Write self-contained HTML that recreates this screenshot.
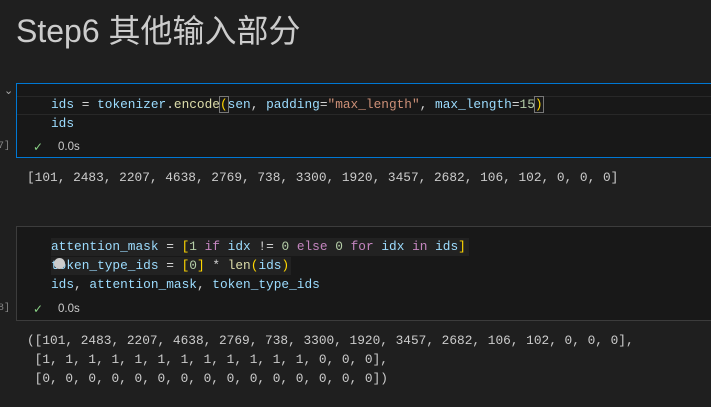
<!DOCTYPE html>
<html><head><meta charset="utf-8"><style>
body{margin:0;width:711px;height:407px;background:#1f1f1f;position:relative;overflow:hidden;font-family:"Liberation Mono",monospace;}
.a{position:absolute;white-space:pre;}
.code{font-size:12.8px;line-height:19px;color:#9cdcfe;}
.out{font-size:12.8px;line-height:19px;color:#cccccc;}
.cell{position:absolute;left:16px;right:-2px;background:#181818;}
.p{color:#d4d4d4}.s{color:#ce9178}.n{color:#b5cea8}.f{color:#dcdcaa}.k{color:#c586c0}.b{color:#ffd700}.c{color:#4ec9b0}
.ck{color:#89d185;font-family:"DejaVu Sans",sans-serif;font-size:12px;font-weight:300}
.t{color:#cccccc;font-family:"Liberation Sans",sans-serif;font-size:11.5px}
.lbl{color:#858585;font-size:10px}
</style></head><body>
<div class="a" style="left:16px;top:9px;font-family:'Liberation Sans','Noto Sans CJK SC',sans-serif;font-size:32px;color:#cccccc;line-height:44px">Step6 其他输入部分</div>

<div class="cell" style="top:83px;height:73px;border:1px solid #0078d4;"></div>
<div class="a" style="left:17px;right:0;top:96px;height:17px;border-top:1px solid #282828;border-bottom:1px solid #282828"></div>
<div class="a" style="left:4px;top:84px;color:#aaa;font-family:'Liberation Sans';font-size:11px">⌄</div>
<div class="a code" style="left:51px;top:95px">ids <span class="p">=</span> tokenizer<span class="p">.</span><span class="f">encode</span><span class="b" style="outline:1px solid #777">(</span>sen<span class="p">,</span> padding<span class="p">=</span><span class="s">"max_length"</span><span class="p">,</span> max_length<span class="p">=</span><span class="n">15</span><span class="b" style="outline:1px solid #777">)</span>
ids</div>
<div class="a ck" style="left:33px;top:140px">✓</div>
<div class="a t" style="left:58px;top:141px">0.0s</div>
<div class="a lbl" style="left:-2px;top:141px">7]</div>
<div class="a out" style="left:27px;top:168px">[101, 2483, 2207, 4638, 2769, 738, 3300, 1920, 3457, 2682, 106, 102, 0, 0, 0]</div>

<div class="cell" style="top:226px;height:93px;border:1px solid #3c3c3c;"></div>
<div class="a" style="left:51px;top:238px;width:418px;height:18px;background:#222"></div>
<div class="a" style="left:51px;top:257px;width:240px;height:18px;background:#222"></div>
<div class="a code" style="left:51px;top:237px">attention_mask <span class="p">=</span> <span class="b">[</span><span class="n">1</span> <span class="k">if</span> idx <span class="p">!=</span> <span class="n">0</span> <span class="k">else</span> <span class="n">0</span> <span class="k">for</span> idx <span class="k">in</span> ids<span class="b">]</span>
token_type_ids <span class="p">=</span> <span class="b">[</span><span class="n">0</span><span class="b">]</span> <span class="p">*</span> <span class="f">len</span><span class="b">(</span>ids<span class="b">)</span>
ids<span class="p">,</span> attention_mask<span class="p">,</span> token_type_ids</div>
<div class="a" style="left:54px;top:258px;width:11px;height:11px;border-radius:50%;background:#ccc"></div>
<div class="a ck" style="left:33px;top:302px">✓</div>
<div class="a t" style="left:58px;top:303px">0.0s</div>
<div class="a lbl" style="left:-2px;top:303px">8]</div>
<div class="a out" style="left:27px;top:331px">([101, 2483, 2207, 4638, 2769, 738, 3300, 1920, 3457, 2682, 106, 102, 0, 0, 0],
 [1, 1, 1, 1, 1, 1, 1, 1, 1, 1, 1, 1, 0, 0, 0],
 [0, 0, 0, 0, 0, 0, 0, 0, 0, 0, 0, 0, 0, 0, 0])</div>
</body></html>
